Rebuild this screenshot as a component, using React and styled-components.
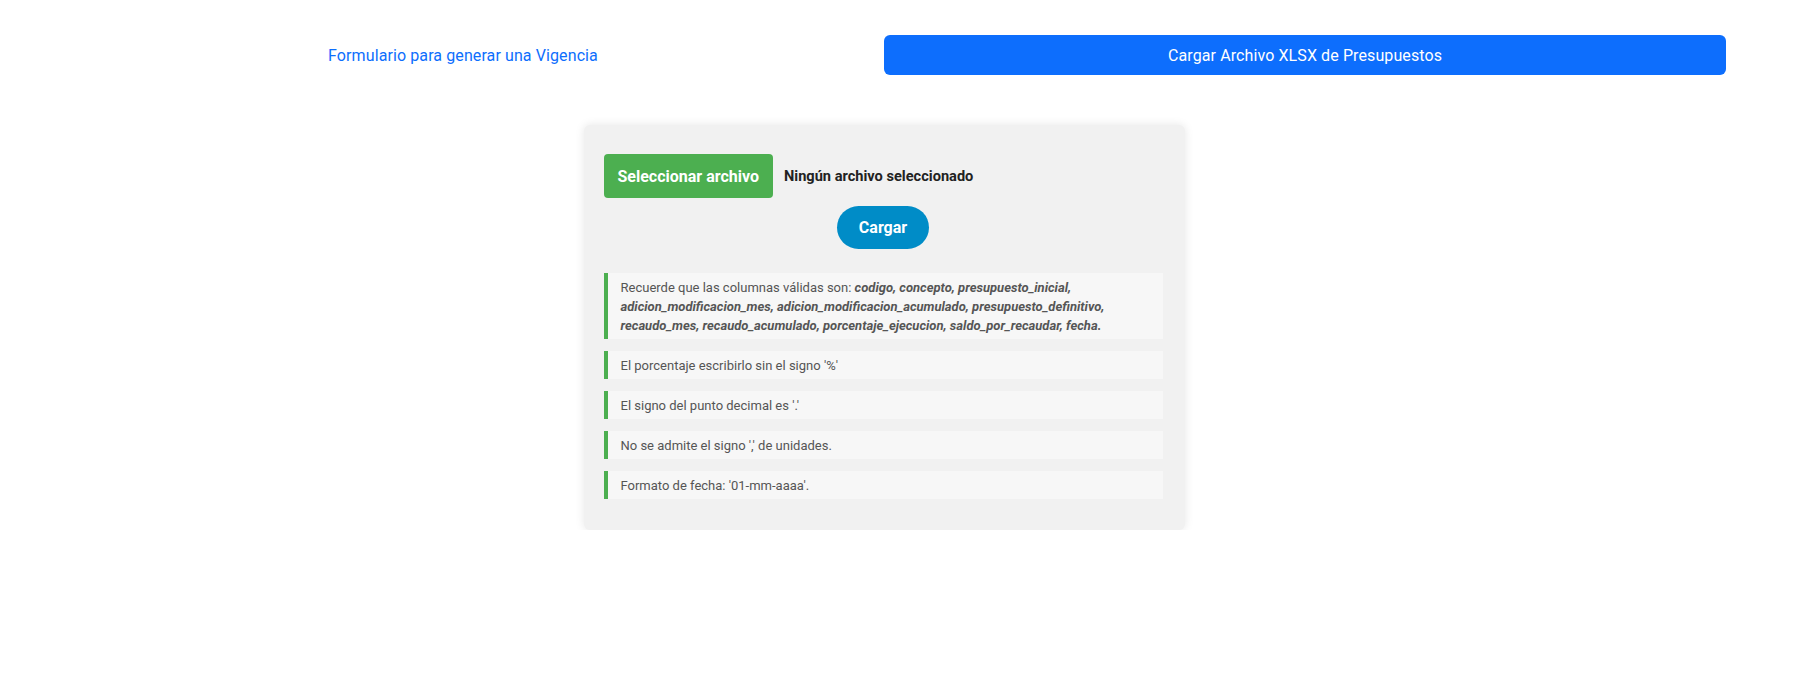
import React from "react";
import styled, { createGlobalStyle } from "styled-components";

const Global = createGlobalStyle`
  html, body { margin: 0; padding: 0; background: #ffffff; }
  body { font-family: Roboto, "Liberation Sans", Arial, sans-serif; }
  * { box-sizing: border-box; }
`;

const Page = styled.div`
  padding: 35px 25px 0 0;
  width: 1793px;
`;

const Nav = styled.nav`
  display: flex;
  margin: 0 42px;
`;

const NavItem = styled.a`
  flex: 1 1 0;
  display: flex;
  align-items: center;
  justify-content: center;
  height: 40px;
  padding: 0 16px;
  border-radius: 6px;
  font-size: 16px;
  letter-spacing: 0.1px;
  text-decoration: none;
  color: ${(p) => (p.$active ? "#ffffff" : "#0d6efd")};
  background: ${(p) => (p.$active ? "#0d6efd" : "transparent")};
`;

const Card = styled.section`
  width: 601px;
  margin: 50px auto 0;
  padding: 29px 22px 31px 20px;
  background: #f1f1f1;
  border-radius: 6px;
  box-shadow: 0 0 10px rgba(0, 0, 0, 0.1);
`;

const FileRow = styled.div`
  display: flex;
  align-items: center;
  gap: 11px;
`;

const SelectButton = styled.button`
  height: 44px;
  padding: 0 14px;
  border: none;
  border-radius: 4px;
  background: #4caf50;
  color: #ffffff;
  font-family: inherit;
  font-size: 16px;
  font-weight: 700;
`;

const FileName = styled.span`
  font-size: 14.6px;
  font-weight: 700;
  color: #222222;
`;

const SubmitRow = styled.div`
  display: flex;
  justify-content: center;
  margin-top: 8px;
`;

const SubmitButton = styled.button`
  height: 43px;
  width: 92px;
  border: none;
  border-radius: 22px;
  background: #008cc7;
  color: #ffffff;
  font-family: inherit;
  font-size: 16px;
  font-weight: 700;
`;

const Notes = styled.div`
  display: flex;
  flex-direction: column;
  gap: 12px;
  margin-top: 24px;
`;

const Note = styled.p`
  margin: 0;
  padding: 4.5px 12px 4.5px 13px;
  border-left: 4px solid #4caf50;
  background: #f7f7f7;
  color: #555555;
  font-size: 13px;
  line-height: 19px;
`;

const Strong = styled.strong`
  font-style: italic;
  font-weight: 700;
`;

export default function App() {
  return (
    <>
      <Global />
      <Page>
        <Nav>
          <NavItem href="#">Formulario para generar una Vigencia</NavItem>
          <NavItem href="#" $active>
            Cargar Archivo XLSX de Presupuestos
          </NavItem>
        </Nav>
        <Card>
          <FileRow>
            <SelectButton type="button">Seleccionar archivo</SelectButton>
            <FileName>Ningún archivo seleccionado</FileName>
          </FileRow>
          <SubmitRow>
            <SubmitButton type="button">Cargar</SubmitButton>
          </SubmitRow>
          <Notes>
            <Note>
              Recuerde que las columnas válidas son:{" "}
              <Strong>
                codigo, concepto, presupuesto_inicial,
                <br />
                adicion_modificacion_mes, adicion_modificacion_acumulado,
                presupuesto_definitivo,
                <br />
                recaudo_mes, recaudo_acumulado, porcentaje_ejecucion,
                saldo_por_recaudar, fecha.
              </Strong>
            </Note>
            <Note>El porcentaje escribirlo sin el signo '%'</Note>
            <Note>El signo del punto decimal es '.'</Note>
            <Note>No se admite el signo ',' de unidades.</Note>
            <Note>Formato de fecha: '01-mm-aaaa'.</Note>
          </Notes>
        </Card>
      </Page>
    </>
  );
}
